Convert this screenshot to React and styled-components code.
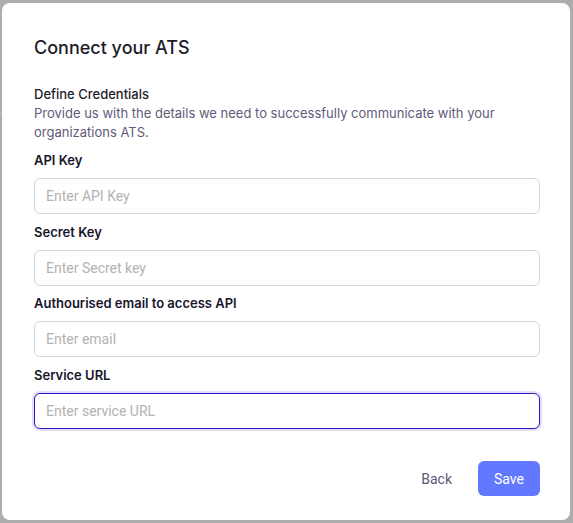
import React from "react";
import styled, { createGlobalStyle } from "styled-components";

const Global = createGlobalStyle`
  html, body { margin: 0; padding: 0; }
  body {
    background: #adadad;
    font-family: Inter, "Noto Sans", sans-serif;
    -webkit-font-smoothing: antialiased;
  }
  * { box-sizing: border-box; }
`;

const Page = styled.div`
  width: 573px;
  height: 523px;
  padding: 3px 3px 3px 2px;
  position: relative;
  overflow: hidden;
`;

const BackdropLine = styled.div`
  position: absolute;
  left: 0;
  top: 113px;
  width: 2px;
  height: 1px;
  background: #c4c4c4;
`;

const Modal = styled.div`
  width: 568px;
  height: 517px;
  background: #ffffff;
  border-radius: 8px;
  padding: 33px 30px 24px 32px;
  display: flex;
  flex-direction: column;
`;

const Title = styled.h2`
  margin: 0;
  font-family: Inter, sans-serif;
  font-size: 18px;
  line-height: 24px;
  font-weight: 500;
  color: #1e1c2a;
`;

const Section = styled.div`
  margin-top: 24px;
  display: flex;
  flex-direction: column;
`;

const SectionTitle = styled.div`
  font-family: Inter, sans-serif;
  font-size: 13px;
  line-height: 20px;
  font-weight: 500;
  color: #1e1c2a;
`;

const Description = styled.p`
  margin: 0;
  font-family: Inter, sans-serif;
  font-size: 13px;
  line-height: 19px;
  font-weight: 400;
  color: #5f5b78;
`;

const Fields = styled.div`
  margin-top: 8px;
  display: flex;
  flex-direction: column;
  gap: 7.5px;
`;

const Field = styled.label`
  display: flex;
  flex-direction: column;
  gap: 8px;
`;

const Label = styled.span`
  font-family: Inter, sans-serif;
  font-size: 13px;
  line-height: 20px;
  font-weight: 600;
  color: #17162a;
`;

const Input = styled.input`
  height: 36px;
  width: 100%;
  border-radius: 6px;
  border: 1px solid ${(p) => (p.$focused ? "#3a0fc9" : "#d6d6d6")};
  box-shadow: ${(p) => (p.$focused ? "0 0 0 2px #e2defb" : "none")};
  padding: 0 11px;
  font-family: Roboto, sans-serif;
  font-size: 14px;
  color: #333;
  outline: none;
  background: #fff;
  &::placeholder { color: #b2b2b2; }
`;

const Footer = styled.div`
  margin-top: auto;
  display: flex;
  justify-content: flex-end;
  gap: 10px;
`;

const Button = styled.button`
  height: 35px;
  padding: 0 16px;
  border: none;
  border-radius: 6px;
  font-family: Roboto, sans-serif;
  font-size: 14px;
  cursor: pointer;
  background: ${(p) => (p.$primary ? "#6279ff" : "transparent")};
  color: ${(p) => (p.$primary ? "#ffffff" : "#5b5878")};
`;

const fields = [
  { label: "API Key", placeholder: "Enter API Key" },
  { label: "Secret Key", placeholder: "Enter Secret key" },
  { label: "Authourised email to access API", placeholder: "Enter email" },
  { label: "Service URL", placeholder: "Enter service URL", focused: true },
];

export default function App() {
  return (
    <>
      <Global />
      <Page>
        <BackdropLine />
        <Modal>
          <Title>Connect your ATS</Title>
          <Section>
            <SectionTitle>Define Credentials</SectionTitle>
            <Description>
              Provide us with the details we need to successfully communicate with your
              organizations ATS.
            </Description>
            <Fields>
              {fields.map((f) => (
                <Field key={f.label}>
                  <Label>{f.label}</Label>
                  <Input placeholder={f.placeholder} $focused={f.focused} />
                </Field>
              ))}
            </Fields>
          </Section>
          <Footer>
            <Button>Back</Button>
            <Button $primary>Save</Button>
          </Footer>
        </Modal>
      </Page>
    </>
  );
}
